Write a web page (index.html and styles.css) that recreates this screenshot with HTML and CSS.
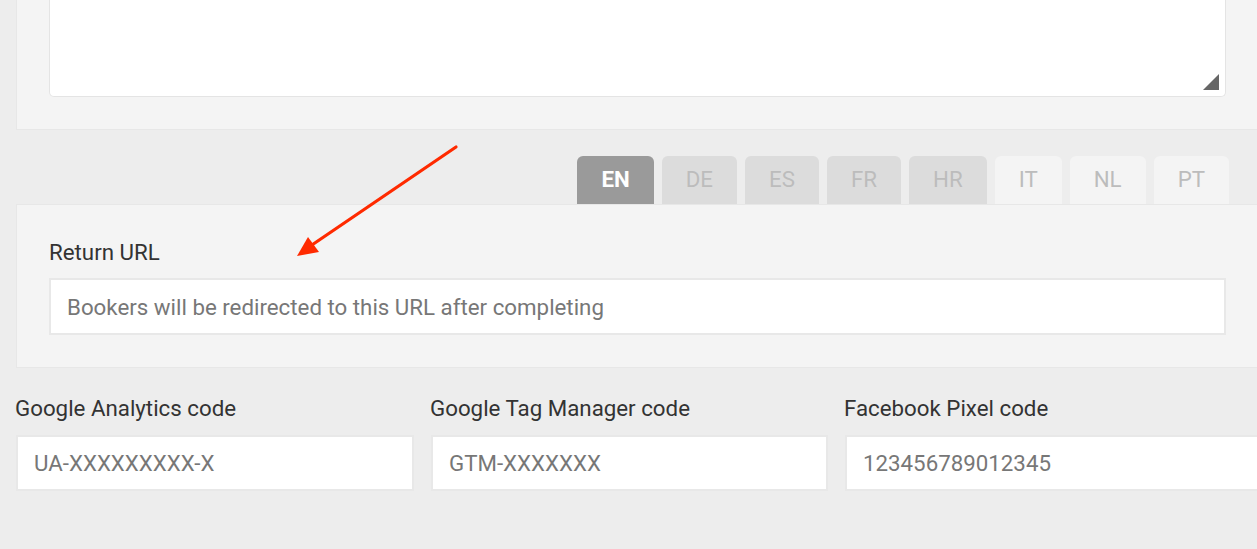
FILE: index.html
```html
<!DOCTYPE html>
<html lang="en">
<head>
<meta charset="utf-8">
<title>Booking settings</title>
<link rel="stylesheet" href="styles.css">
</head>
<body>
<div class="page">
  <section class="panel panel-top">
    <div class="textarea">
      <svg class="grip" width="16" height="16" viewBox="0 0 16 16"><polygon points="0,16 16,0 16,16" fill="#666"/></svg>
    </div>
  </section>

  <nav class="tabs">
    <span class="tab active">EN</span>
    <span class="tab filled">DE</span>
    <span class="tab filled">ES</span>
    <span class="tab filled">FR</span>
    <span class="tab filled">HR</span>
    <span class="tab empty">IT</span>
    <span class="tab empty">NL</span>
    <span class="tab empty">PT</span>
  </nav>

  <section class="panel panel-url">
    <label class="label">Return URL</label>
    <div class="input input-tall"><span class="placeholder">Bookers will be redirected to this URL after completing</span></div>
  </section>

  <div class="codes">
    <div class="field">
      <label class="label">Google Analytics code</label>
      <div class="input"><span class="placeholder">UA-XXXXXXXXX-X</span></div>
    </div>
    <div class="field">
      <label class="label">Google Tag Manager code</label>
      <div class="input"><span class="placeholder">GTM-XXXXXXX</span></div>
    </div>
    <div class="field">
      <label class="label">Facebook Pixel code</label>
      <div class="input"><span class="placeholder">123456789012345</span></div>
    </div>
  </div>

  <svg class="arrow" width="1257" height="549" viewBox="0 0 1257 549">
    <line x1="456" y1="147" x2="306" y2="249" stroke="#ff2a00" stroke-width="3.2" stroke-linecap="round"/>
    <polygon points="297,256 308,237 319,252" fill="#ff2a00"/>
  </svg>
</div>
</body>
</html>
```

FILE: styles.css
```css
html, body {
  margin: 0;
  padding: 0;
  overflow: hidden;
  background: #ededed;
}

body {
  font-family: Roboto, "Liberation Sans", Arial, sans-serif;
  font-size: 22.3px;
  color: #333;
  width: 1257px;
  height: 549px;
}

.page {
  position: relative;
  margin-left: 16px;
  width: 1243px;
}

.panel {
  background: #f4f4f4;
  border: 1px solid #e7e7e7;
  border-right: none;
  padding: 0 33px 0 32px;
}

.panel-top {
  border-top: none;
  padding-bottom: 32px;
}

.textarea {
  position: relative;
  height: 96px;
  background: #fff;
  border: 1px solid #e4e4e4;
  border-top: none;
  border-radius: 0 0 5px 5px;
}

.grip {
  position: absolute;
  right: 6px;
  bottom: 6px;
}

.tabs {
  display: flex;
  justify-content: flex-end;
  gap: 8px;
  margin-top: 26px;
  padding-right: 30px;
  height: 48px;
}

.tab {
  display: flex;
  align-items: center;
  justify-content: center;
  padding: 0 24px 2px;
  border-radius: 6px 6px 0 0;
  color: #bcbcbc;
  line-height: 1;
}

.tab.active {
  background: #9a9a9a;
  color: #fff;
  font-weight: 700;
}

.tab.filled {
  background: #dcdcdc;
}

.tab.empty {
  background: #f4f4f4;
}

.panel-url {
  padding-top: 34px;
  padding-bottom: 32px;
}

.label {
  display: block;
  line-height: 26px;
  height: 26px;
  color: #333;
}

.panel-url .label {
  margin-bottom: -1px;
}

.input {
  display: flex;
  align-items: center;
  box-sizing: border-box;
  height: 56px;
  margin-top: 14px;
  background: #fff;
  border: 2px solid #e8e8e8;
  padding: 0 16px;
}

.input-tall {
  height: 57px;
}

.placeholder {
  color: #777;
  white-space: nowrap;
}

.codes {
  display: grid;
  grid-template-columns: 398px 397px 1fr;
  gap: 17px;
  margin-top: 27px;
  margin-right: -40px;
}

.field .label {
  margin-left: -1px;
}

.arrow {
  position: absolute;
  left: -16px;
  top: 0;
  pointer-events: none;
}
```
